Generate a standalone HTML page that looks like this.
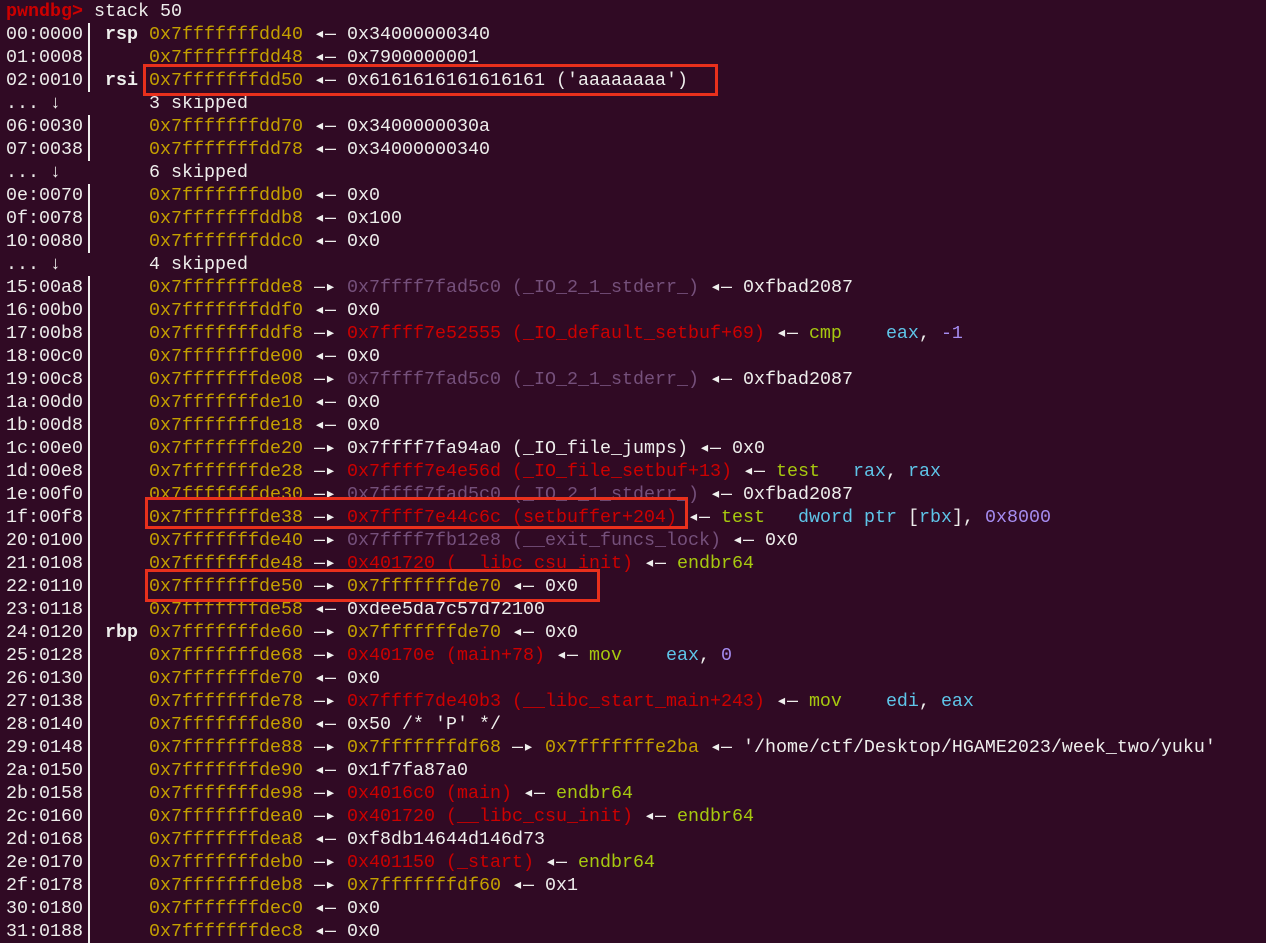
<!DOCTYPE html>
<html><head><meta charset="utf-8"><style>
html,body{margin:0;padding:0;background:#300a24;width:1266px;height:940px;overflow:hidden}
pre{margin:0;position:absolute;left:6px;top:0px;font-family:"Liberation Mono","DejaVu Sans Mono",monospace;font-size:18.33px;line-height:23px;color:#eeeeec;white-space:pre}
.b{display:inline-block;width:11px;height:23px;vertical-align:top;background:linear-gradient(#eeeeec,#eeeeec) no-repeat 5px 0/2px 100%}
.a{display:inline-block;width:11px;text-align:center;overflow:hidden;vertical-align:top}
.y{color:#c4a000}.r{color:#cc0000}.p{color:#75507b}.g{color:#a6c80f}.c{color:#5ec4e8}.m{color:#a58cf0}
.pr{color:#cc0000;font-weight:bold}.reg{font-weight:bold}
.box{position:absolute;border:3px solid #e8301c;box-sizing:border-box}
</style></head><body>
<pre><span class="pr">pwndbg&gt;</span> stack 50
00:0000<span class="b"></span> <span class="reg">rsp</span> <span class="y">0x7fffffffdd40</span> <span class="a">◂</span><span class="a">—</span> 0x34000000340
01:0008<span class="b"></span>     <span class="y">0x7fffffffdd48</span> <span class="a">◂</span><span class="a">—</span> 0x7900000001
02:0010<span class="b"></span> <span class="reg">rsi</span> <span class="y">0x7fffffffdd50</span> <span class="a">◂</span><span class="a">—</span> 0x6161616161616161 ('aaaaaaaa')
... <span class="a">↓</span>        3 skipped
06:0030<span class="b"></span>     <span class="y">0x7fffffffdd70</span> <span class="a">◂</span><span class="a">—</span> 0x3400000030a
07:0038<span class="b"></span>     <span class="y">0x7fffffffdd78</span> <span class="a">◂</span><span class="a">—</span> 0x34000000340
... <span class="a">↓</span>        6 skipped
0e:0070<span class="b"></span>     <span class="y">0x7fffffffddb0</span> <span class="a">◂</span><span class="a">—</span> 0x0
0f:0078<span class="b"></span>     <span class="y">0x7fffffffddb8</span> <span class="a">◂</span><span class="a">—</span> 0x100
10:0080<span class="b"></span>     <span class="y">0x7fffffffddc0</span> <span class="a">◂</span><span class="a">—</span> 0x0
... <span class="a">↓</span>        4 skipped
15:00a8<span class="b"></span>     <span class="y">0x7fffffffdde8</span> <span class="a">—</span><span class="a">▸</span> <span class="p">0x7ffff7fad5c0 (_IO_2_1_stderr_)</span> <span class="a">◂</span><span class="a">—</span> 0xfbad2087
16:00b0<span class="b"></span>     <span class="y">0x7fffffffddf0</span> <span class="a">◂</span><span class="a">—</span> 0x0
17:00b8<span class="b"></span>     <span class="y">0x7fffffffddf8</span> <span class="a">—</span><span class="a">▸</span> <span class="r">0x7ffff7e52555 (_IO_default_setbuf+69)</span> <span class="a">◂</span><span class="a">—</span> <span class="g">cmp</span>    <span class="c">eax</span>, <span class="m">-1</span>
18:00c0<span class="b"></span>     <span class="y">0x7fffffffde00</span> <span class="a">◂</span><span class="a">—</span> 0x0
19:00c8<span class="b"></span>     <span class="y">0x7fffffffde08</span> <span class="a">—</span><span class="a">▸</span> <span class="p">0x7ffff7fad5c0 (_IO_2_1_stderr_)</span> <span class="a">◂</span><span class="a">—</span> 0xfbad2087
1a:00d0<span class="b"></span>     <span class="y">0x7fffffffde10</span> <span class="a">◂</span><span class="a">—</span> 0x0
1b:00d8<span class="b"></span>     <span class="y">0x7fffffffde18</span> <span class="a">◂</span><span class="a">—</span> 0x0
1c:00e0<span class="b"></span>     <span class="y">0x7fffffffde20</span> <span class="a">—</span><span class="a">▸</span> 0x7ffff7fa94a0 (_IO_file_jumps) <span class="a">◂</span><span class="a">—</span> 0x0
1d:00e8<span class="b"></span>     <span class="y">0x7fffffffde28</span> <span class="a">—</span><span class="a">▸</span> <span class="r">0x7ffff7e4e56d (_IO_file_setbuf+13)</span> <span class="a">◂</span><span class="a">—</span> <span class="g">test</span>   <span class="c">rax</span>, <span class="c">rax</span>
1e:00f0<span class="b"></span>     <span class="y">0x7fffffffde30</span> <span class="a">—</span><span class="a">▸</span> <span class="p">0x7ffff7fad5c0 (_IO_2_1_stderr_)</span> <span class="a">◂</span><span class="a">—</span> 0xfbad2087
1f:00f8<span class="b"></span>     <span class="y">0x7fffffffde38</span> <span class="a">—</span><span class="a">▸</span> <span class="r">0x7ffff7e44c6c (setbuffer+204)</span> <span class="a">◂</span><span class="a">—</span> <span class="g">test</span>   <span class="c">dword ptr</span> [<span class="c">rbx</span>], <span class="m">0x8000</span>
20:0100<span class="b"></span>     <span class="y">0x7fffffffde40</span> <span class="a">—</span><span class="a">▸</span> <span class="p">0x7ffff7fb12e8 (__exit_funcs_lock)</span> <span class="a">◂</span><span class="a">—</span> 0x0
21:0108<span class="b"></span>     <span class="y">0x7fffffffde48</span> <span class="a">—</span><span class="a">▸</span> <span class="r">0x401720 (__libc_csu_init)</span> <span class="a">◂</span><span class="a">—</span> <span class="g">endbr64</span>
22:0110<span class="b"></span>     <span class="y">0x7fffffffde50</span> <span class="a">—</span><span class="a">▸</span> <span class="y">0x7fffffffde70</span> <span class="a">◂</span><span class="a">—</span> 0x0
23:0118<span class="b"></span>     <span class="y">0x7fffffffde58</span> <span class="a">◂</span><span class="a">—</span> 0xdee5da7c57d72100
24:0120<span class="b"></span> <span class="reg">rbp</span> <span class="y">0x7fffffffde60</span> <span class="a">—</span><span class="a">▸</span> <span class="y">0x7fffffffde70</span> <span class="a">◂</span><span class="a">—</span> 0x0
25:0128<span class="b"></span>     <span class="y">0x7fffffffde68</span> <span class="a">—</span><span class="a">▸</span> <span class="r">0x40170e (main+78)</span> <span class="a">◂</span><span class="a">—</span> <span class="g">mov</span>    <span class="c">eax</span>, <span class="m">0</span>
26:0130<span class="b"></span>     <span class="y">0x7fffffffde70</span> <span class="a">◂</span><span class="a">—</span> 0x0
27:0138<span class="b"></span>     <span class="y">0x7fffffffde78</span> <span class="a">—</span><span class="a">▸</span> <span class="r">0x7ffff7de40b3 (__libc_start_main+243)</span> <span class="a">◂</span><span class="a">—</span> <span class="g">mov</span>    <span class="c">edi</span>, <span class="c">eax</span>
28:0140<span class="b"></span>     <span class="y">0x7fffffffde80</span> <span class="a">◂</span><span class="a">—</span> 0x50 /* 'P' */
29:0148<span class="b"></span>     <span class="y">0x7fffffffde88</span> <span class="a">—</span><span class="a">▸</span> <span class="y">0x7fffffffdf68</span> <span class="a">—</span><span class="a">▸</span> <span class="y">0x7fffffffe2ba</span> <span class="a">◂</span><span class="a">—</span> '/home/ctf/Desktop/HGAME2023/week_two/yuku'
2a:0150<span class="b"></span>     <span class="y">0x7fffffffde90</span> <span class="a">◂</span><span class="a">—</span> 0x1f7fa87a0
2b:0158<span class="b"></span>     <span class="y">0x7fffffffde98</span> <span class="a">—</span><span class="a">▸</span> <span class="r">0x4016c0 (main)</span> <span class="a">◂</span><span class="a">—</span> <span class="g">endbr64</span>
2c:0160<span class="b"></span>     <span class="y">0x7fffffffdea0</span> <span class="a">—</span><span class="a">▸</span> <span class="r">0x401720 (__libc_csu_init)</span> <span class="a">◂</span><span class="a">—</span> <span class="g">endbr64</span>
2d:0168<span class="b"></span>     <span class="y">0x7fffffffdea8</span> <span class="a">◂</span><span class="a">—</span> 0xf8db14644d146d73
2e:0170<span class="b"></span>     <span class="y">0x7fffffffdeb0</span> <span class="a">—</span><span class="a">▸</span> <span class="r">0x401150 (_start)</span> <span class="a">◂</span><span class="a">—</span> <span class="g">endbr64</span>
2f:0178<span class="b"></span>     <span class="y">0x7fffffffdeb8</span> <span class="a">—</span><span class="a">▸</span> <span class="y">0x7fffffffdf60</span> <span class="a">◂</span><span class="a">—</span> 0x1
30:0180<span class="b"></span>     <span class="y">0x7fffffffdec0</span> <span class="a">◂</span><span class="a">—</span> 0x0
31:0188<span class="b"></span>     <span class="y">0x7fffffffdec8</span> <span class="a">◂</span><span class="a">—</span> 0x0</pre>
<div class="box" style="left:143px;top:64px;width:575px;height:32px"></div>
<div class="box" style="left:145px;top:497px;width:543px;height:32px"></div>
<div class="box" style="left:145px;top:569px;width:455px;height:33px"></div>
</body></html>
